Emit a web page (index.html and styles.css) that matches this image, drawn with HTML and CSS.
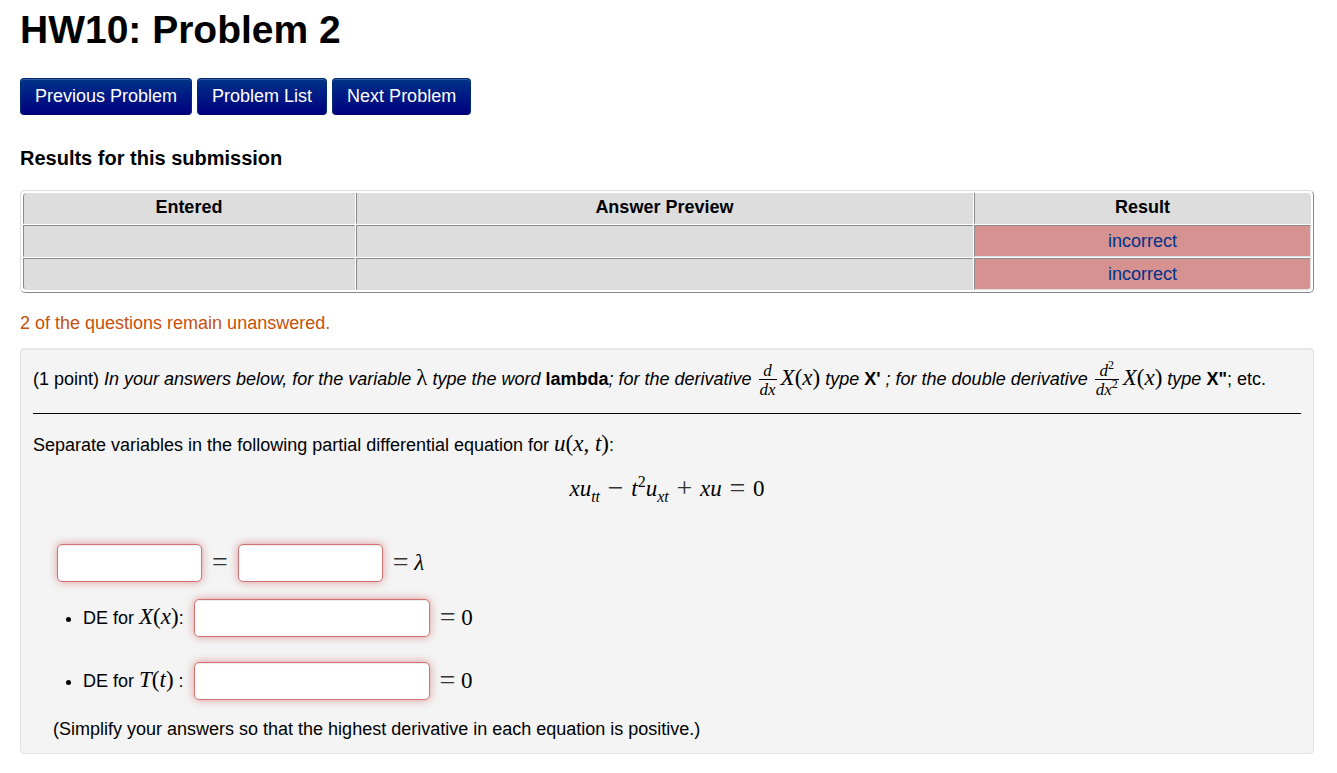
FILE: index.html
```html
<!DOCTYPE html>
<html lang="en">

<head>
  <meta charset="UTF-8">
  <meta name="viewport" content="width=device-width, initial-scale=1.0">
  <title>HW10: Problem 2</title>
  <link rel="stylesheet" href="styles.css">
</head>

<body>
  <h1>HW10: Problem 2</h1>

  <div class="nav">
    <a class="btn" href="#">Previous Problem</a>
    <a class="btn" href="#">Problem List</a>
    <a class="btn" href="#">Next Problem</a>
  </div>

  <h3>Results for this submission</h3>
  <table class="results">
    <colgroup>
      <col class="entered">
      <col class="preview">
      <col class="result">
    </colgroup>
    <tr><th>Entered</th><th>Answer Preview</th><th>Result</th></tr>
    <tr><td></td><td></td><td class="wrong"><a href="#AnSwEr0001">incorrect</a></td></tr>
    <tr><td></td><td></td><td class="wrong"><a href="#AnSwEr0003">incorrect</a></td></tr>
  </table>

  <p class="notice">2 of the questions remain unanswered.</p>

  <form class="problem">
    <p class="intro">
      (1 point) <i>In your answers below, for the variable <span class="math">λ</span> type the word <b>lambda</b>; for the derivative
      <span class="frac"><span>d</span><span>dx</span></span><span class="math"><i>X</i>(<i>x</i>)</span> type <b>X'</b> ; for the double derivative
      <span class="frac"><span>d<sup>2</sup></span><span>dx<sup>2</sup></span></span><span class="math"><i>X</i>(<i>x</i>)</span> type <b>X"</b></i>; etc.
    </p>
    <hr>
    <p class="task">Separate variables in the following partial differential equation for <span class="math"><i>u</i>(<i>x</i>, <i>t</i>)</span>:</p>
    <p class="equation math"><i>xu<sub>tt</sub></i> <span class="op">−</span> <i>t</i><sup>2</sup><i>u<sub>xt</sub></i> <span class="op">+</span> <i>xu</i> <span class="op">=</span> 0</p>

    <div class="row">
      <input class="short" type="text" id="AnSwEr0001" aria-label="answer 1">
      <span class="math"><span class="op">=</span></span>
      <input class="short" type="text" id="AnSwEr0002" aria-label="answer 2">
      <span class="math"><span class="op">=</span> <i>λ</i></span>
    </div>
    <ul>
      <li><div class="row">
        <label for="AnSwEr0003">DE for <span class="math"><i>X</i>(<i>x</i>)</span>:</label>
        <input type="text" id="AnSwEr0003">
        <span class="math"><span class="op">=</span> 0</span>
      </div></li>
      <li><div class="row">
        <label for="AnSwEr0004">DE for <span class="math"><i>T</i>(<i>t</i>)</span> :</label>
        <input type="text" id="AnSwEr0004">
        <span class="math"><span class="op">=</span> 0</span>
      </div></li>
    </ul>
    <p class="note">(Simplify your answers so that the highest derivative in each equation is positive.)</p>
  </form>
</body>

</html>
```
FILE: styles.css
```css
/* Basic Style */
* {
  box-sizing: border-box;
}
body {
  margin: 0;
  padding: 8px 23px 20px 20px;
  background: #fff;
  color: #000;
  font-family: 'Liberation Sans', Arial, sans-serif;
  font-size: 18px;
  line-height: 24px;
}
p, ul {
  margin: 0;
}
h1 {
  margin: 0 0 26px;
  font-size: 39px;
  line-height: 44px;
}
h3 {
  margin: 0 0 20px;
  font-size: 20px;
  line-height: 24px;
}

/* Buttons */
.nav {
  display: flex;
  gap: 5px;
  margin-bottom: 31px;
}
.btn {
  padding: 5px 14px 6px;
  border: 1px solid #002c77;
  border-color: #002c77 #002c77 #000066;
  border-radius: 4px;
  background: linear-gradient(#003388, #000080);
  box-shadow: inset 0 1px 0 rgba(255, 255, 255, .2);
  color: #fff;
  text-decoration: none;
}

/* Results table */
.results {
  width: 100%;
  padding: 1px;
  table-layout: fixed;
  border: 1px outset #ddd;
  border-radius: 5px;
  border-spacing: 1px;
}
.entered {
  width: 25.8%;
}
.preview {
  width: 48%;
}
.results th, .results td {
  height: 32px;
  padding: 3px;
  border: 1px inset #ddd;
  background: #ddd;
  text-align: center;
}
.results th {
  height: 31px;
  padding: 2px 3px 4px;
  border-top: 0;
}
.results th:first-child {
  border-top-left-radius: 4px;
}
.results th:last-child {
  border-top-right-radius: 4px;
}
.results tr:last-child td:first-child {
  border-bottom-left-radius: 4px;
}
.results tr:last-child td:last-child {
  border-bottom-right-radius: 4px;
}
.results .wrong {
  background: #d69191;
}
.results a {
  color: #003388;
  text-decoration: none;
}
.notice {
  margin: 18px 0 13px;
  color: #c8500a;
}

/* Problem body */
.problem {
  padding: 12px;
  border: 1px solid #e3e3e3;
  border-radius: 4px;
  background: #f4f4f4;
  box-shadow: inset 0 1px 1px rgba(0, 0, 0, .05);
}
.intro {
  line-height: 36px;
}
.intro b {
  font-style: normal;
}
hr {
  margin: 15px 0 19px;
  border: 0;
  border-top: 1px solid #000;
}
.math, .frac {
  font-family: 'Liberation Serif', 'Times New Roman', serif;
  font-size: 23px;
  font-style: normal;
  line-height: 20px;
}
.op {
  color: #333;
  font-size: 28px;
  line-height: 0;
  vertical-align: -1px;
}
.equation .op {
  margin: 0 2px;
}
.frac {
  display: inline-flex;
  flex-direction: column;
  align-items: center;
  margin: 0 4px 0 2px;
  font-size: 17px;
  font-style: italic;
  line-height: 17px;
  vertical-align: middle;
}
.frac > span + span {
  padding: 1px 1px 0;
  border-top: 1px solid #000;
}
sup, sub {
  font-size: 16px;
  line-height: 0;
}
.frac sup {
  font-size: 12px;
  font-style: normal;
}
.equation {
  margin: 22px 0 45px;
  text-align: center;
}
.row {
  display: flex;
  align-items: center;
  gap: 10px;
}
.problem > .row {
  margin: 0 24px 17px;
}
input {
  width: 236px;
  height: 38px;
  padding: 4px 6px;
  border: 1px solid #d27272;
  border-radius: 5px;
  background: #fff;
  box-shadow: inset 0 1px 1px rgba(0, 0, 0, .08), 0 0 8px rgba(200, 60, 60, .5);
  font: inherit;
}
.short {
  width: 145px;
}
ul {
  padding-left: 50px;
}
li {
  margin-bottom: 25px;
}
.note {
  margin: -8px 0 0 20px;
}
```
